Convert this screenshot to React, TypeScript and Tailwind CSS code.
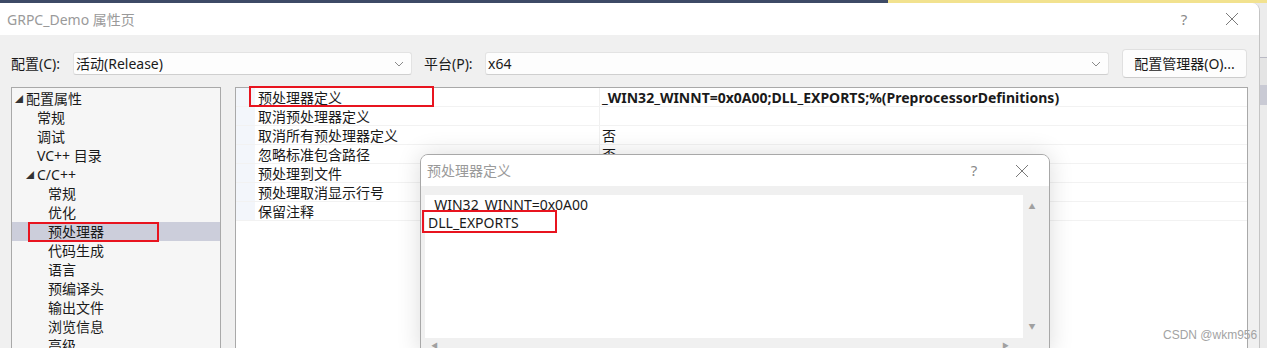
import React from "react";

const font = "font-['Noto_Sans','Noto_Sans_CJK_SC',sans-serif]";

type TreeItem = { label: string; level: number; open?: boolean; selected?: boolean };

const tree: TreeItem[] = [
  { label: "配置属性", level: 0, open: true },
  { label: "常规", level: 1 },
  { label: "调试", level: 1 },
  { label: "VC++ 目录", level: 1 },
  { label: "C/C++", level: 1, open: true },
  { label: "常规", level: 2 },
  { label: "优化", level: 2 },
  { label: "预处理器", level: 2, selected: true },
  { label: "代码生成", level: 2 },
  { label: "语言", level: 2 },
  { label: "预编译头", level: 2 },
  { label: "输出文件", level: 2 },
  { label: "浏览信息", level: 2 },
  { label: "高级", level: 2 },
];

const props: { name: string; value: string; bold?: boolean; mark?: boolean }[] = [
  { name: "预处理器定义", value: "_WIN32_WINNT=0x0A00;DLL_EXPORTS;%(PreprocessorDefinitions)", bold: true, mark: true },
  { name: "取消预处理器定义", value: "" },
  { name: "取消所有预处理器定义", value: "否" },
  { name: "忽略标准包含路径", value: "否" },
  { name: "预处理到文件", value: "" },
  { name: "预处理取消显示行号", value: "" },
  { name: "保留注释", value: "" },
];

const indent = ["pl-[3px]", "pl-[14px]", "pl-[25px]"];

function Chevron() {
  return (
    <svg width="10" height="6" viewBox="0 0 10 6" className="shrink-0">
      <path d="M1 1l4 4 4-4" fill="none" stroke="#8a8a8a" strokeWidth="1" />
    </svg>
  );
}

function CloseX({ color = "#7a7a7a" }: { color?: string }) {
  return (
    <svg width="14" height="14" viewBox="0 0 14 14">
      <path d="M1 1l12 12M13 1L1 13" stroke={color} strokeWidth="1" />
    </svg>
  );
}

function Combo({ text, className }: { text: string; className: string }) {
  return (
    <div
      className={`flex items-center h-[23px] bg-[#fdfdfd] border border-[#e3e3e3] border-b-[#cfcfcf] rounded-[3px] pl-[2px] pr-[7px] text-[14px] text-[#1a1a1a] ${className}`}
    >
      <span className="flex-1">{text}</span>
      <Chevron />
    </div>
  );
}

export default function App(): React.JSX.Element {
  return (
    <div className={`relative w-[1267px] h-[348px] overflow-hidden bg-[#e9e9e9] ${font}`}>
      {/* windows behind */}
      <div className="flex h-[3px]">
        <div className="w-[888px] bg-[#3d4a66]" />
        <div className="flex-1 bg-[#f2e28f]" />
      </div>

      <div className="flex h-[345px]">
        {/* main dialog */}
        <div className="flex flex-col w-[1260px] bg-[#f0f0f0] rounded-tr-[8px] border-r border-[#c4c4c4] overflow-hidden">
          <div className="flex shrink-0 items-center h-[32px] bg-white pl-[7px]">
            <span className="flex-1 text-[14px] text-[#9a9a9a]">GRPC_Demo 属性页</span>
            <span className="w-[20px] text-center text-[15px] text-[#8a8a8a] mr-[31px]">?</span>
            <span className="mr-[20px]">
              <CloseX />
            </span>
          </div>

          <div className="flex shrink-0 items-center h-[29px] mt-[14px] pl-[11px] text-[14px] text-[#1a1a1a]">
            <span className="w-[62px]">配置(C):</span>
            <Combo text="活动(Release)" className="w-[339px]" />
            <span className="ml-[12px] w-[61px]">平台(P):</span>
            <Combo text="x64" className="w-[624px]" />
            <div className="ml-[13px] flex items-center justify-center w-[125px] h-[29px] bg-[#fdfdfd] border border-[#e0e0e0] border-b-[#cccccc] rounded-[4px]">
              配置管理器(O)...
            </div>
          </div>

          <div className="flex flex-1 min-h-0 mt-[9px] pl-[11px] gap-[14px]">
            {/* tree */}
            <div className="w-[210px] bg-[#f6f6f6] border border-[#a9a9a9] border-b-0 pt-[1px] text-[14px] text-[#1a1a1a]">
              {tree.map((t, i) => (
                <div
                  key={i}
                  className={`relative flex shrink-0 items-center h-[19px] ${indent[t.level]} ${t.selected ? "bg-[#cccedb]" : ""}`}
                >
                  {t.open ? (
                    <span className="w-[11px] text-[8px] text-[#333] leading-none">◢</span>
                  ) : (
                    <span className="w-[11px]" />
                  )}
                  <span>{t.label}</span>
                  {t.selected && (
                    <div className="absolute left-[16px] top-0 w-[131px] h-[20px] border-2 border-[#e8141f]" />
                  )}
                </div>
              ))}
            </div>

            {/* property grid */}
            <div className="w-[1013px] bg-white border border-[#a9a9a9] border-b-0 text-[14px] text-[#1a1a1a]">
              {props.map((p, i) => (
                <div key={i} className="relative flex h-[19px] border-b border-[#f2f2f2]">
                  <div className="w-[19px] bg-[#f3f6fb]" />
                  <div className="flex items-center w-[344px] pl-[3px]">{p.name}</div>
                  <div className={`flex items-center flex-1 pl-[2px] border-l border-[#f0f0f0] ${p.bold ? "font-bold" : ""}`}>
                    {p.value}
                  </div>
                  {p.mark && (
                    <div className="absolute left-[13px] top-[-2px] w-[185px] h-[21px] border-2 border-[#e8141f]" />
                  )}
                </div>
              ))}
            </div>
          </div>
        </div>

        {/* window behind, right edge */}
        <div className="flex flex-col flex-1">
          <div className="h-[55px] bg-[#ececec] border-b border-[#b9b9c4]" />
          <div className="h-[27px] bg-[#e4e4e4]" />
          <div className="h-[20px] bg-[#c9cad4]" />
          <div className="flex-1 bg-[#ebebeb]" />
        </div>
      </div>

      {/* popup dialog */}
      <div className="absolute left-[420px] top-[154px] w-[630px] h-[200px] flex flex-col bg-[#f0f0f0] border border-[#a8a8a8] rounded-t-[8px] overflow-hidden shadow-[0_0_24px_rgba(0,0,0,0.14)] text-[14px]">
        <div className="flex shrink-0 items-center h-[31px] bg-white pl-[6px]">
          <span className="flex-1 text-[14px] text-[#9a9a9a]">预处理器定义</span>
          <span className="w-[20px] text-center text-[15px] text-[#8a8a8a] mr-[31px]">?</span>
          <span className="mr-[20px]">
            <CloseX />
          </span>
        </div>
        <div className="flex flex-col shrink-0 ml-[4px] mr-[8px] mt-[9px]">
          <div className="flex h-[143px] bg-white">
            <div className="flex-1 pl-[3px] pt-[1px] text-[#1a1a1a]">
              <div className="relative h-[18px] leading-[18px] overflow-hidden">_WIN32_WINNT=0x0A00</div>
              <div className="relative h-[18px] leading-[18px]">
                DLL_EXPORTS
                <div className="absolute left-[-6px] top-[-4px] w-[135px] h-[23px] border-2 border-[#e8141f]" />
              </div>
            </div>
            <div className="flex flex-col items-center justify-between w-[18px] bg-[#f0f0f0] py-[8px] text-[7px] text-[#a0a0a0] leading-none">
              <span>▲</span>
              <span>▼</span>
            </div>
          </div>
          <div className="flex items-center justify-between h-[14px] px-[6px] text-[7px] text-[#a0a0a0] leading-none">
            <span>◀</span>
            <span className="mr-[26px]">▶</span>
          </div>
        </div>
      </div>

      <div className="absolute left-[1163px] top-[326px] text-[12px] text-[#a3a3a3] font-['Liberation_Sans',sans-serif]">
        CSDN @wkm956
      </div>
    </div>
  );
}
